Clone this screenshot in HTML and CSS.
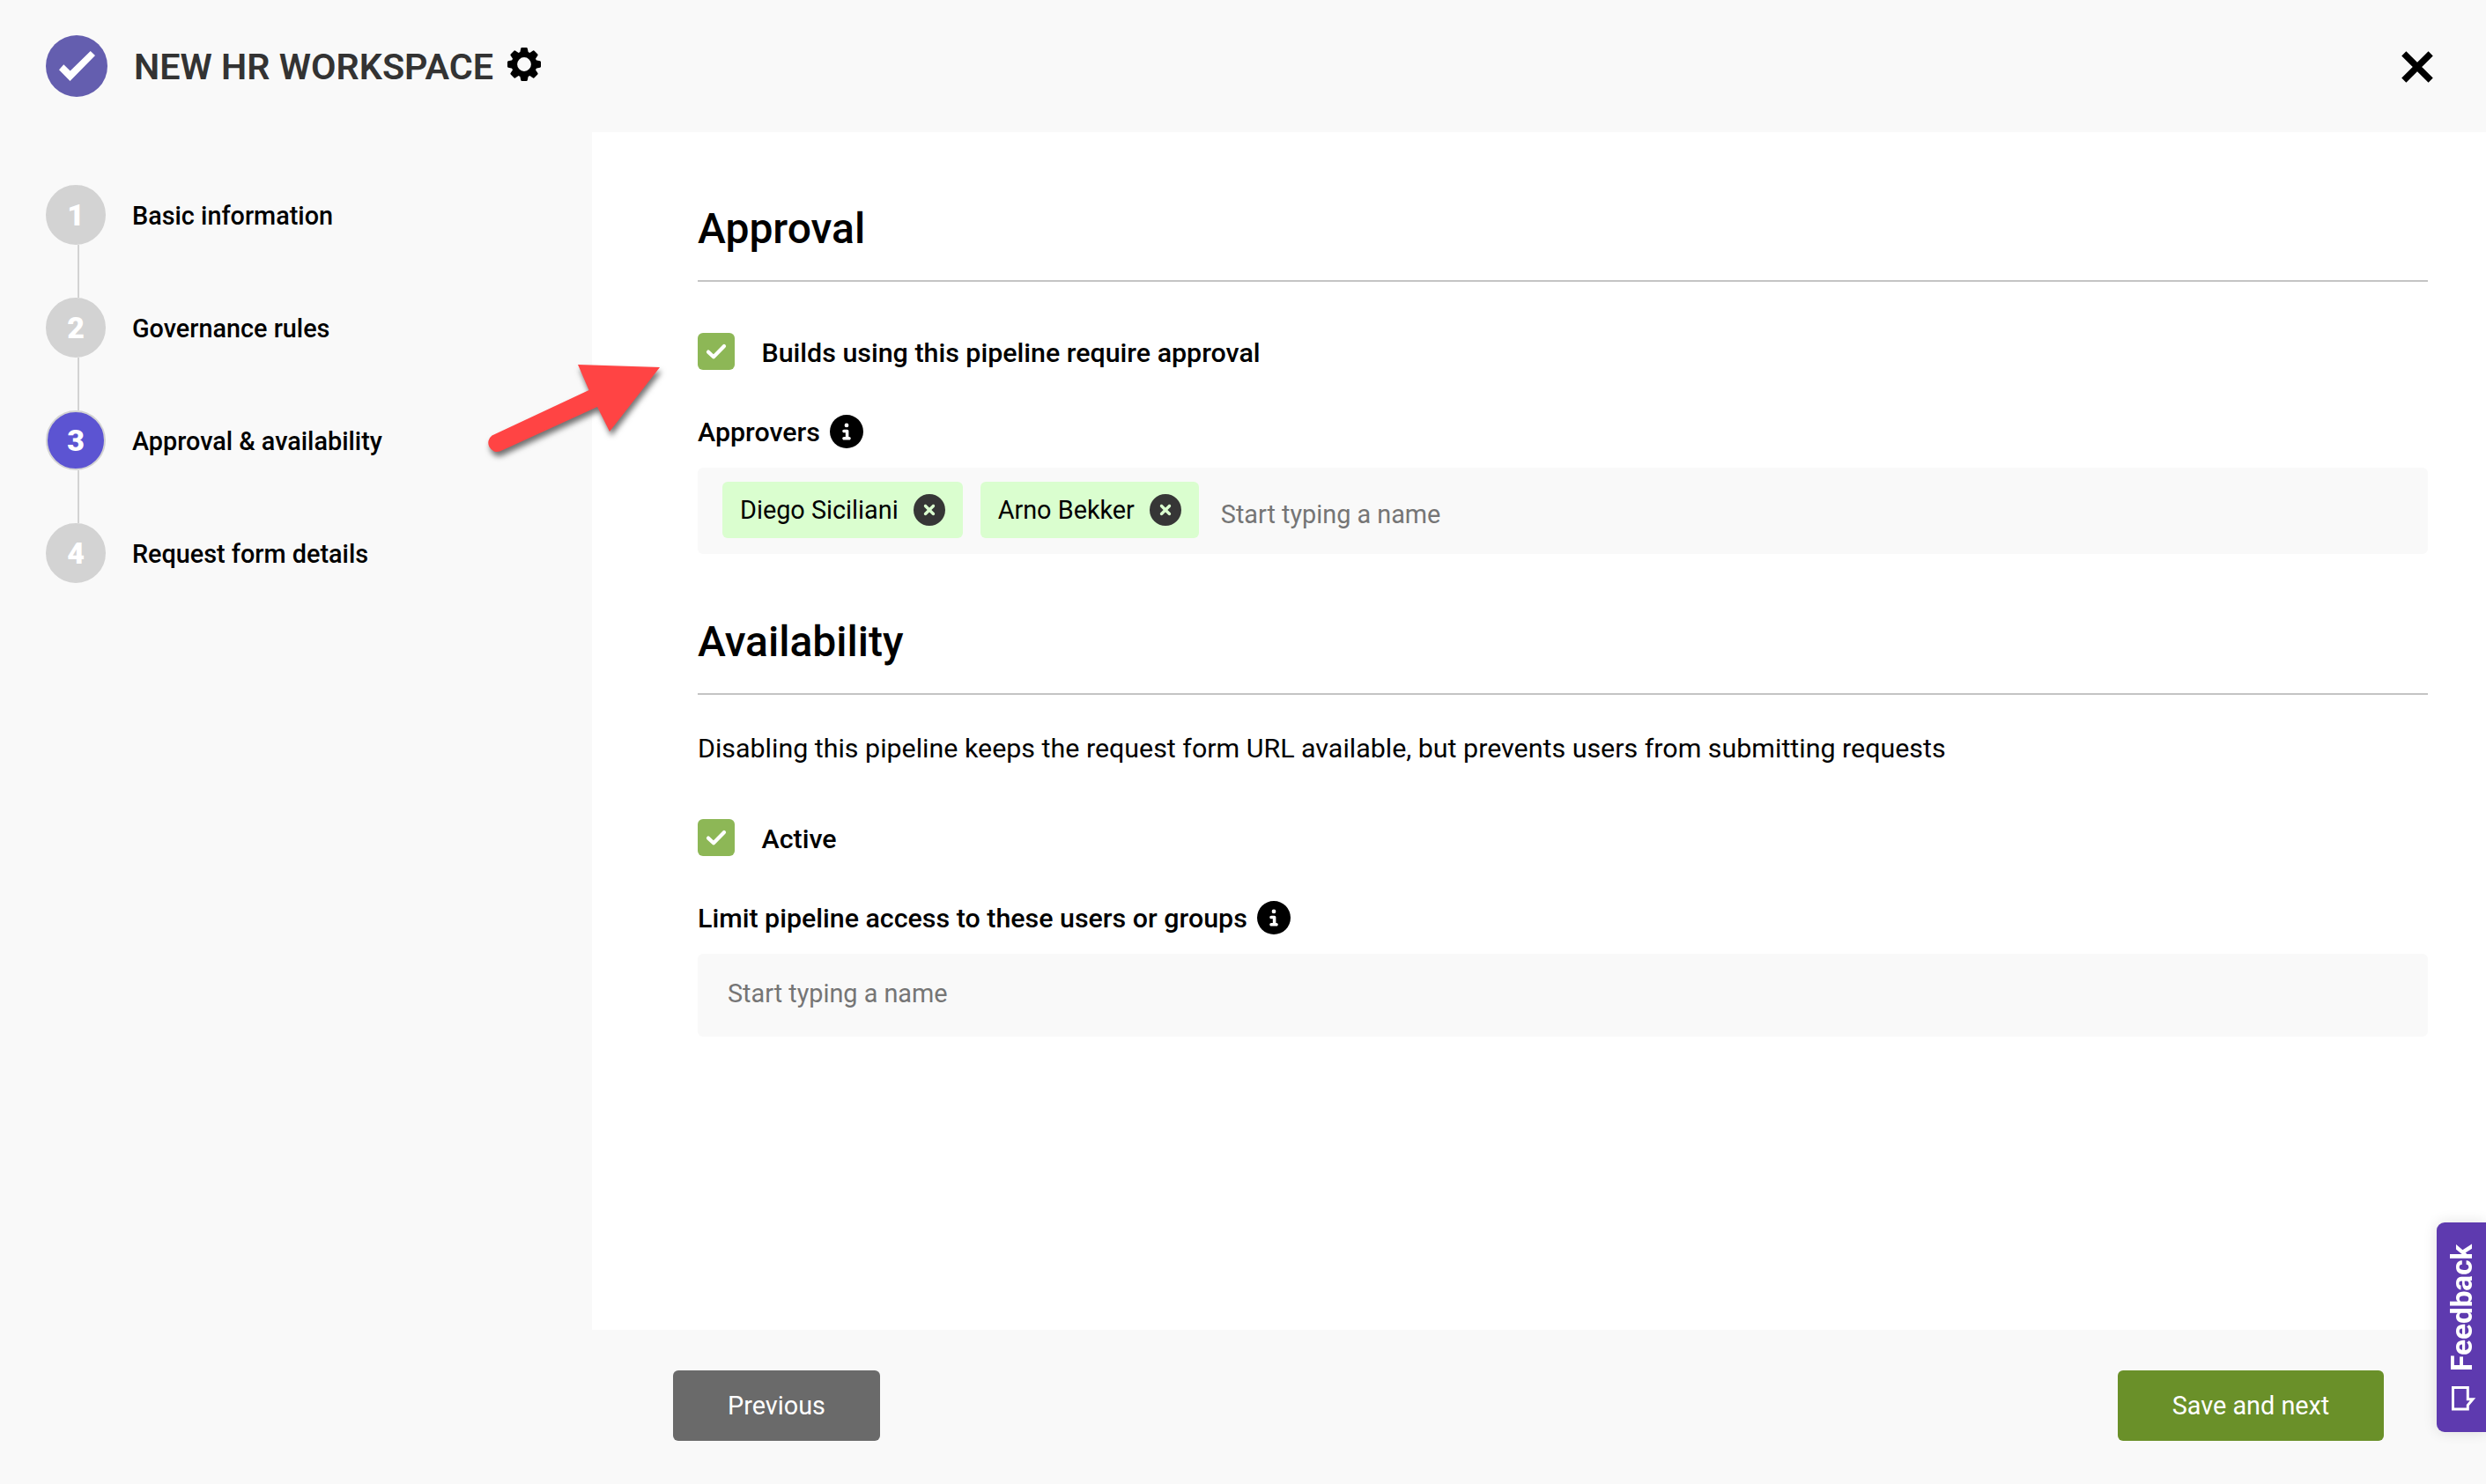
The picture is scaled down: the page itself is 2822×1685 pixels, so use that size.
FILE: index.html
```html
<!DOCTYPE html>
<html lang="en">
<head>
<meta charset="utf-8">
<title>New HR Workspace</title>
<link rel="stylesheet" href="styles.css">
</head>
<body>
<svg class="defs" aria-hidden="true">
  <symbol id="check" viewBox="0 0 42 42"><path d="M12 21.6l6 5.6L30 15" fill="none" stroke="#fff" stroke-width="4.2" stroke-linecap="round" stroke-linejoin="round"/></symbol>
  <symbol id="info" viewBox="0 0 512 512"><path d="M256 512A256 256 0 1 0 256 0a256 256 0 1 0 0 512zM216 336h24V272H216c-13.300 0-24-10.700-24-24s10.700-24 24-24h48c13.300 0 24 10.700 24 24v88h8c13.300 0 24 10.700 24 24s-10.700 24-24 24H216c-13.300 0-24-10.700-24-24s10.700-24 24-24zm40-208a32 32 0 1 1 0 64 32 32 0 1 1 0-64z"/></symbol>
  <symbol id="remove" viewBox="0 0 512 512"><path fill="#363636" d="M256 512A256 256 0 1 0 256 0a256 256 0 1 0 0 512zM175 175c9.400-9.400 24.600-9.400 33.900 0l47 47 47-47c9.400-9.400 24.600-9.400 33.900 0s9.400 24.600 0 33.900l-47 47 47 47c9.400 9.400 9.400 24.600 0 33.900s-24.600 9.400-33.900 0l-47-47-47 47c-9.400 9.400-24.600 9.400-33.900 0s-9.400-24.600 0-33.900l47-47-47-47c-9.400-9.400-9.400-24.600 0-33.900z"/></symbol>
</svg>
<div class="app">
  <header class="header">
    <svg class="logo" viewBox="0 0 70 70"><circle cx="35" cy="35" r="35" fill="#645eaf"/><path d="M15 39.300l5.300-6 7.400 7.200 23-22.400 5.300 4.900-28.500 29z" fill="#fff"/></svg>
    <h1 class="title">NEW HR WORKSPACE</h1>
    <svg class="gear" viewBox="-19 -19 38 38">
      <circle r="11.200" fill="none" stroke="#000" stroke-width="6.600"/>
      <g stroke="#000" stroke-width="2.400" stroke-linejoin="round">
        <path id="tooth" d="M-3.600-13l1-4.800h5.200l1 4.800z"/>
        <use href="#tooth" transform="rotate(45)"/><use href="#tooth" transform="rotate(90)"/><use href="#tooth" transform="rotate(135)"/><use href="#tooth" transform="rotate(180)"/><use href="#tooth" transform="rotate(225)"/><use href="#tooth" transform="rotate(270)"/><use href="#tooth" transform="rotate(315)"/>
      </g>
    </svg>
    <svg class="close" viewBox="0 0 36 36"><path d="M2.800 2.800l30.400 30.400M33.200 2.800L2.800 33.200" stroke="#000" stroke-width="7.300"/></svg>
  </header>
  <nav class="steps">
    <div class="step"><span class="num">1</span><span class="name">Basic information</span></div>
    <div class="bar"></div>
    <div class="step"><span class="num">2</span><span class="name">Governance rules</span></div>
    <div class="bar"></div>
    <div class="step"><span class="num active">3</span><span class="name">Approval &amp; availability</span></div>
    <div class="bar"></div>
    <div class="step"><span class="num">4</span><span class="name">Request form details</span></div>
  </nav>
  <main class="main">
    <section class="section">
      <h2 class="heading">Approval</h2>
      <div class="option first"><svg class="box"><use href="#check"/></svg><span class="option-text">Builds using this pipeline require approval</span></div>
      <div class="label"><span>Approvers</span><svg class="info"><use href="#info"/></svg></div>
      <div class="field chips">
        <span class="chip">Diego Siciliani<svg class="remove"><use href="#remove"/></svg></span>
        <span class="chip">Arno Bekker<svg class="remove"><use href="#remove"/></svg></span>
        <span class="hint">Start typing a name</span>
      </div>
    </section>
    <section class="section">
      <h2 class="heading">Availability</h2>
      <p class="note">Disabling this pipeline keeps the request form URL available, but prevents users from submitting requests</p>
      <div class="option"><svg class="box"><use href="#check"/></svg><span class="option-text">Active</span></div>
      <div class="label"><span>Limit pipeline access to these users or groups</span><svg class="info"><use href="#info"/></svg></div>
      <div class="field empty">Start typing a name</div>
    </section>
  </main>
  <footer class="footer">
    <button class="btn previous">Previous</button>
    <button class="btn save">Save and next</button>
  </footer>
</div>
<svg class="arrow" viewBox="540 400 230 140"><path d="M749 417L656 414l12.500 29L558.500 494.500a10.200 10.200 0 0 0 9 18L678 462l14 28z"/></svg>
<div class="feedback">
  <span class="feedback-text">Feedback</span>
  <svg class="bubble" viewBox="0 0 28 28"><path d="M1.500 1.500H18.300V14.800H24L18.300 21.500V26H1.500z" fill="none" stroke="#fff" stroke-width="3"/></svg>
</div>
</body>
</html>
```
FILE: styles.css
```css
* { box-sizing: border-box; }
body { margin: 0; font-family: Roboto, sans-serif; color: #000; background: #f9f9f9; overflow: hidden; }
svg { display: block; flex: none; }
.defs { position: absolute; width: 0; height: 0; }
.app {
  display: grid;
  grid-template: 150px 1360px 175px / 672px 1fr;
  height: 1685px;
}
.header { grid-column: 1 / 3; display: flex; align-items: center; padding: 0 60px 0 52px; }
.logo { width: 70px; height: 70px; }
.title { margin: 2px 0 0 30px; font-size: 41.3px; font-weight: 600; line-height: 50px; color: #333; white-space: nowrap; }
.gear { width: 38px; height: 38px; margin: 0 auto 4px 16px; }
.close { width: 36px; height: 36px; margin-top: 2px; }

.steps { padding: 60px 0 0 52px; }
.step { display: flex; align-items: center; height: 68px; }
.num {
  width: 68px; height: 68px; border-radius: 50%;
  border: 2px solid #d3d3d3; background: #d3d3d3; color: #fff;
  font-size: 34px; font-weight: 900; line-height: 64px; text-align: center;
}
.num.active { background: #5c54d2; }
.name { margin: 2px 0 0 30px; font-size: 28.8px; font-weight: 500; line-height: 40px; }
.bar { width: 2px; height: 60px; margin-left: 36px; background: #d3d3d3; }

.main { background: #fff; padding: 52px 66px 0 120px; }
.section + .section { margin-top: 42px; }
.heading {
  margin: 0; height: 118px; line-height: 116px;
  font-size: 48px; font-weight: 500; border-bottom: 2px solid #c4c4c4;
}
.option { display: flex; align-items: center; height: 42px; margin-top: 60px; }
.option.first { margin-top: 58px; }
.box { width: 42px; height: 42px; border-radius: 6px; background: #8db756; }
.option-text { margin: 3px 0 0 30.5px; font-size: 30.4px; font-weight: 500; line-height: 40px; }
.label { display: flex; align-items: center; gap: 11px; height: 38px; margin-top: 51px; font-size: 30.4px; font-weight: 500; }
.info { width: 38px; height: 38px; }
.field { margin-top: 22px; border-radius: 6px; background: #f9f9f9; color: #757575; font-size: 28.8px; }
.chips { display: flex; gap: 20px; height: 98px; padding: 16px 28px; }
.chip {
  display: flex; align-items: center; gap: 17px; height: 64px; padding: 0 20px;
  border-radius: 6px; background: #dafecf; color: #000; font-size: 28.8px;
}
.remove { width: 36px; height: 36px; }
.hint { margin-left: 5px; line-height: 74px; }
.empty { height: 94px; line-height: 90px; padding-left: 34px; }
.note { margin: 41px 0 0; font-size: 30.4px; line-height: 40px; white-space: nowrap; }

.footer { grid-column: 1 / 3; display: flex; justify-content: space-between; padding: 46px 116px 0 764px; }
.btn { height: 80px; padding: 0; border: 0; border-radius: 6px; color: #fff; font: 28.8px/80px Roboto, sans-serif; }
.previous { width: 235px; background: #6a6a6a; }
.save { width: 302px; background: #6a9029; }

.arrow { position: absolute; left: 540px; top: 400px; width: 230px; height: 140px; fill: #ff4444; filter: drop-shadow(2px 5px 3px rgba(0, 0, 0, .55)); }

.feedback {
  position: absolute; right: 0; top: 1388px; width: 56px; height: 238px;
  display: flex; flex-direction: column; align-items: flex-start; gap: 17px; padding-top: 23px;
  border-radius: 9px 0 0 9px; background: #5e3aaf; box-shadow: 0 0 16px rgba(0, 0, 0, .12);
}
.feedback-text { writing-mode: vertical-rl; transform: rotate(180deg); height: 146px; line-height: 58px; font-size: 33.3px; font-weight: 700; color: #fff; }
.bubble { width: 28px; height: 28px; margin-left: 17px; }
```
